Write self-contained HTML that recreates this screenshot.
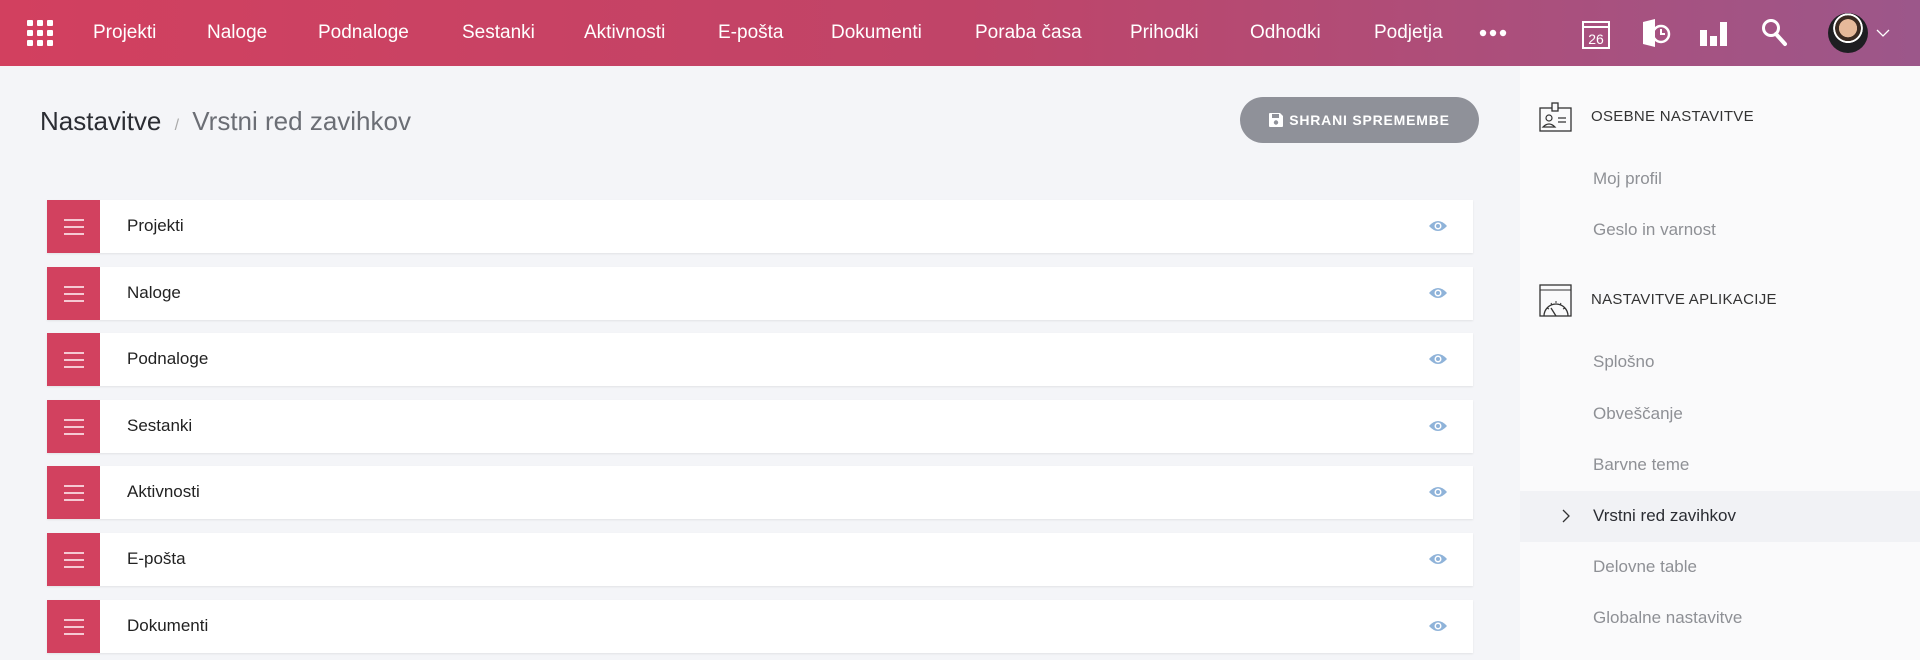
<!DOCTYPE html>
<html><head><meta charset="utf-8"><style>
*{margin:0;padding:0;box-sizing:border-box}
body{width:1920px;height:660px;overflow:hidden;background:#f4f5f8;font-family:"Liberation Sans",sans-serif;position:relative}
.hdr{position:absolute;left:0;top:0;width:1920px;height:66px;background:linear-gradient(90deg,#d2405f 0%,#c04468 50%,#9c578a 100%)}
.nav{position:absolute;top:22px;color:#fff;font-size:19px}
.abs{position:absolute}
.row{position:absolute;left:47px;width:1426px;height:53px;background:#fff;box-shadow:0 1px 2px rgba(0,0,0,.08)}
.row .h{position:absolute;left:0;top:0;width:53px;height:53px;background:#d2415f}
.row .h i{position:absolute;left:17px;width:20px;height:2px;background:#f5c9d3}
.row .t{position:absolute;left:80px;top:16px;font-size:17px;color:#222}
.row svg{position:absolute;left:1381px;top:19px}
.side{position:absolute;left:1520px;top:66px;width:400px;height:594px;background:#fafafb}
.sh{position:absolute;left:71px;font-size:15px;color:#333;letter-spacing:.3px}
.si{position:absolute;left:73px;font-size:17px;color:#8e9095}
</style></head><body>
<div class="hdr">
<svg class="abs" style="left:27px;top:20px" width="26" height="26"><g fill="#fff">
<rect x="0" y="0" width="6" height="6" rx="1"/><rect x="10" y="0" width="6" height="6" rx="1"/><rect x="20" y="0" width="6" height="6" rx="1"/>
<rect x="0" y="10" width="6" height="6" rx="1"/><rect x="10" y="10" width="6" height="6" rx="1"/><rect x="20" y="10" width="6" height="6" rx="1"/>
<rect x="0" y="20" width="6" height="6" rx="1"/><rect x="10" y="20" width="6" height="6" rx="1"/><rect x="20" y="20" width="6" height="6" rx="1"/></g></svg>
<span class="nav" style="left:93px">Projekti</span>
<span class="nav" style="left:207px">Naloge</span>
<span class="nav" style="left:318px">Podnaloge</span>
<span class="nav" style="left:462px">Sestanki</span>
<span class="nav" style="left:584px">Aktivnosti</span>
<span class="nav" style="left:718px">E-pošta</span>
<span class="nav" style="left:831px">Dokumenti</span>
<span class="nav" style="left:975px">Poraba časa</span>
<span class="nav" style="left:1130px">Prihodki</span>
<span class="nav" style="left:1250px">Odhodki</span>
<span class="nav" style="left:1374px">Podjetja</span>
<svg class="abs" style="left:1479px;top:29px" width="28" height="8"><g fill="#fff"><circle cx="4" cy="4" r="3.2"/><circle cx="14" cy="4" r="3.2"/><circle cx="24" cy="4" r="3.2"/></g></svg>
<svg class="abs" style="left:1582px;top:19px" width="28" height="30"><rect x="1" y="3" width="26" height="26" fill="none" stroke="#fff" stroke-width="2"/><line x1="1" y1="8" x2="27" y2="8" stroke="#fff" stroke-width="2"/><text x="14" y="25" font-size="14" fill="#fff" text-anchor="middle" font-family="Liberation Sans">26</text></svg>
<svg class="abs" style="left:1641px;top:18px" width="30" height="30"><path d="M2 4 L14 1 L14 29 L2 26Z" fill="#fff"/><circle cx="20" cy="16" r="8" fill="none" stroke="#fff" stroke-width="2.5"/><path d="M20 11v5h4" stroke="#fff" stroke-width="2" fill="none"/></svg>
<svg class="abs" style="left:1700px;top:20px" width="28" height="26"><g fill="#fff"><rect x="0" y="10" width="7" height="16"/><rect x="10" y="16" width="7" height="10"/><rect x="20" y="2" width="7" height="24"/></g></svg>
<svg class="abs" style="left:1761px;top:18px" width="28" height="30"><circle cx="10" cy="10" r="7.5" fill="none" stroke="#fff" stroke-width="3"/><line x1="15" y1="16" x2="24" y2="26" stroke="#fff" stroke-width="4" stroke-linecap="round"/></svg>
<div class="abs" style="left:1828px;top:13px;width:40px;height:40px;border-radius:50%;background:radial-gradient(circle at 50% 38%,#e6b99a 0 28%,#3a2a22 29% 40%,#fff 41% 46%,#1e1e22 47%)"></div>
<svg class="abs" style="left:1876px;top:29px" width="14" height="9"><path d="M1 1l6 6 6-6" stroke="#fff" stroke-width="1.3" fill="none"/></svg>
</div>

<div class="abs" style="left:40px;top:106px;font-size:26px;color:#2b2d33">Nastavitve <span style="color:#aaa;font-size:16px;margin:0 6px">/</span> <span style="color:#6b6e75">Vrstni red zavihkov</span></div>
<div class="abs" style="left:1240px;top:97px;width:239px;height:46px;border-radius:23px;background:#8f9199;color:#fff;font-size:14px;font-weight:bold;letter-spacing:.8px;line-height:46px;text-align:center">
<svg style="vertical-align:-2px;margin-right:6px" width="14" height="14"><path d="M0 1a1 1 0 011-1h10l3 3v10a1 1 0 01-1 1H1a1 1 0 01-1-1z" fill="#fff"/><rect x="3" y="1" width="7" height="4" fill="#8f9199"/><circle cx="7" cy="9.5" r="2.2" fill="#8f9199"/></svg>SHRANI SPREMEMBE</div>

<div class="row" style="top:200px"><div class="h"><i style="top:19px"></i><i style="top:26px"></i><i style="top:33px"></i></div><div class="t">Projekti</div><svg width="20" height="14"><path d="M1 7Q10-3 19 7Q10 17 1 7Z" fill="#8fb3d9"/><circle cx="10" cy="7" r="3.5" fill="#fff"/><circle cx="10" cy="7" r="2" fill="#8fb3d9"/></svg></div>
<div class="row" style="top:267px"><div class="h"><i style="top:19px"></i><i style="top:26px"></i><i style="top:33px"></i></div><div class="t">Naloge</div><svg width="20" height="14"><path d="M1 7Q10-3 19 7Q10 17 1 7Z" fill="#8fb3d9"/><circle cx="10" cy="7" r="3.5" fill="#fff"/><circle cx="10" cy="7" r="2" fill="#8fb3d9"/></svg></div>
<div class="row" style="top:333px"><div class="h"><i style="top:19px"></i><i style="top:26px"></i><i style="top:33px"></i></div><div class="t">Podnaloge</div><svg width="20" height="14"><path d="M1 7Q10-3 19 7Q10 17 1 7Z" fill="#8fb3d9"/><circle cx="10" cy="7" r="3.5" fill="#fff"/><circle cx="10" cy="7" r="2" fill="#8fb3d9"/></svg></div>
<div class="row" style="top:400px"><div class="h"><i style="top:19px"></i><i style="top:26px"></i><i style="top:33px"></i></div><div class="t">Sestanki</div><svg width="20" height="14"><path d="M1 7Q10-3 19 7Q10 17 1 7Z" fill="#8fb3d9"/><circle cx="10" cy="7" r="3.5" fill="#fff"/><circle cx="10" cy="7" r="2" fill="#8fb3d9"/></svg></div>
<div class="row" style="top:466px"><div class="h"><i style="top:19px"></i><i style="top:26px"></i><i style="top:33px"></i></div><div class="t">Aktivnosti</div><svg width="20" height="14"><path d="M1 7Q10-3 19 7Q10 17 1 7Z" fill="#8fb3d9"/><circle cx="10" cy="7" r="3.5" fill="#fff"/><circle cx="10" cy="7" r="2" fill="#8fb3d9"/></svg></div>
<div class="row" style="top:533px"><div class="h"><i style="top:19px"></i><i style="top:26px"></i><i style="top:33px"></i></div><div class="t">E-pošta</div><svg width="20" height="14"><path d="M1 7Q10-3 19 7Q10 17 1 7Z" fill="#8fb3d9"/><circle cx="10" cy="7" r="3.5" fill="#fff"/><circle cx="10" cy="7" r="2" fill="#8fb3d9"/></svg></div>
<div class="row" style="top:600px"><div class="h"><i style="top:19px"></i><i style="top:26px"></i><i style="top:33px"></i></div><div class="t">Dokumenti</div><svg width="20" height="14"><path d="M1 7Q10-3 19 7Q10 17 1 7Z" fill="#8fb3d9"/><circle cx="10" cy="7" r="3.5" fill="#fff"/><circle cx="10" cy="7" r="2" fill="#8fb3d9"/></svg></div>

<div class="side">
<svg class="abs" style="left:19px;top:36px" width="33" height="30"><rect x="1" y="6" width="31" height="23" fill="none" stroke="#333" stroke-width="1.3"/><rect x="13" y="1" width="6" height="8" fill="#fafafb" stroke="#333" stroke-width="1.3"/><circle cx="10" cy="16" r="3" fill="none" stroke="#333" stroke-width="1.2"/><path d="M4 25q6-6 12 0z" fill="none" stroke="#333" stroke-width="1.2"/><path d="M19 16h8M19 20h8" stroke="#333" stroke-width="1.2"/></svg>
<div class="sh" style="top:42px">OSEBNE NASTAVITVE</div>
<div class="si" style="top:103px">Moj profil</div>
<div class="si" style="top:154px">Geslo in varnost</div>
<svg class="abs" style="left:19px;top:218px" width="33" height="33"><rect x="1" y="1" width="31" height="31" fill="none" stroke="#333" stroke-width="1.3"/><line x1="1" y1="6" x2="32" y2="6" stroke="#333" stroke-width="1"/><path d="M5 32a12 12 0 0124 0" fill="none" stroke="#333" stroke-width="1.3"/><path d="M17 32l-5-8" stroke="#333" stroke-width="1.3"/><path d="M8 24l2 1M12 19l1 2M17 17v2M22 19l-1 2M26 24l-2 1" stroke="#333"/></svg>
<div class="sh" style="top:225px">NASTAVITVE APLIKACIJE</div>
<div class="si" style="top:286px">Splošno</div>
<div class="si" style="top:338px">Obveščanje</div>
<div class="si" style="top:389px">Barvne teme</div>
<div class="abs" style="left:0;top:425px;width:400px;height:51px;background:#f1f2f5"></div>
<svg class="abs" style="left:42px;top:443px" width="9" height="14"><path d="M1 1l6 6-6 6" stroke="#333" stroke-width="1.3" fill="none"/></svg>
<div class="si" style="top:440px;color:#2b2d33">Vrstni red zavihkov</div>
<div class="si" style="top:491px">Delovne table</div>
<div class="si" style="top:542px">Globalne nastavitve</div>
</div>
</body></html>
